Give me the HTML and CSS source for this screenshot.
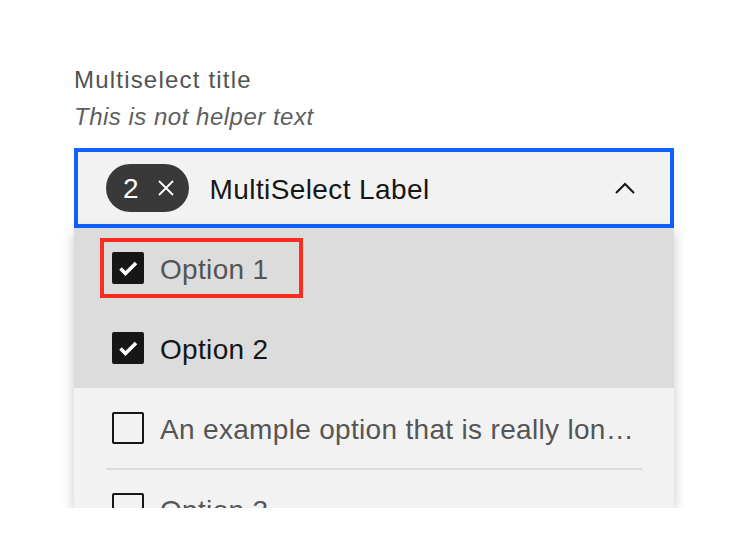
FILE: index.html
```html
<!DOCTYPE html>
<html lang="en">
<head>
  <meta charset="UTF-8">
  <meta name="viewport" content="width=device-width, initial-scale=1.0">
  <title>MultiSelect</title>
  <link rel="stylesheet" href="styles.css">
</head>
<body>
  <div class="wrap">
    <div class="title">Multiselect title</div>
    <div class="helper">This is not helper text</div>

    <div class="multiselect">
      <div class="field">
        <span class="tag">
          <span class="tag-count">2</span>
          <svg class="tag-close" width="16" height="16" viewBox="0 0 16 16">
            <path d="M1 1 L15 15 M15 1 L1 15" stroke="#fff" stroke-width="1.8" fill="none"/>
          </svg>
        </span>
        <span class="field-label">MultiSelect Label</span>
        <svg class="chevron" width="20" height="12" viewBox="0 0 20 12">
          <path d="M1 11 L10 2 L19 11" stroke="#161616" stroke-width="2.1" fill="none"/>
        </svg>
      </div>

      <div class="menu">
        <div class="option selected">
          <div class="option-inner">
            <span class="box checked">
              <svg width="32" height="32" viewBox="0 0 32 32">
                <path d="M8.5 16.5 L13.5 21.5 L24 11" stroke="#fff" stroke-width="3.6" fill="none"/>
              </svg>
            </span>
            <span class="option-text muted">Option 1</span>
          </div>
          <div class="annot"></div>
        </div>
        <div class="option selected">
          <div class="option-inner">
            <span class="box checked">
              <svg width="32" height="32" viewBox="0 0 32 32">
                <path d="M8.5 16.5 L13.5 21.5 L24 11" stroke="#fff" stroke-width="3.6" fill="none"/>
              </svg>
            </span>
            <span class="option-text">Option 2</span>
          </div>
        </div>
        <div class="option">
          <div class="option-inner">
            <span class="box"></span>
            <span class="option-text muted">An example option that is really long to show what should be done to handle long text</span>
          </div>
        </div>
        <div class="option">
          <div class="option-inner divided">
            <span class="box"></span>
            <span class="option-text muted">Option 3</span>
          </div>
        </div>
      </div>
    </div>
  </div>
</body>
</html>
```

FILE: styles.css
```css
body {
  margin: 0;
  background: #fff;
  font-family: "Liberation Sans", Arial, sans-serif;
  color: #161616;
}

.wrap {
  width: 600px;
  margin: 64px 0 0 74px;
}

.title {
  font-size: 24px;
  line-height: 32px;
  letter-spacing: 1.2px;
  color: #525252;
  margin-bottom: 5px;
}

.helper {
  font-size: 24px;
  line-height: 32px;
  font-style: italic;
  letter-spacing: 0.5px;
  color: #5e5e5e;
  margin-bottom: 15px;
}

.field {
  box-sizing: border-box;
  height: 80px;
  border: 4px solid #0f62fe;
  background: #f2f2f2;
  display: flex;
  align-items: center;
  padding: 0 35px 0 28px;
}

.tag {
  display: inline-flex;
  align-items: center;
  height: 48px;
  padding: 0 15px 0 17px;
  border-radius: 24px;
  background: #393939;
  color: #fff;
  font-size: 28px;
}

.tag-count {
  padding-top: 2px;
}

.tag-close {
  margin-left: 19px;
}

.field-label {
  margin-left: 21px;
  padding-top: 3px;
  font-size: 28px;
  letter-spacing: 0.4px;
}

.chevron {
  margin-left: auto;
}

.menu {
  height: 280px;
  overflow: hidden;
  background: #f2f2f2;
  box-shadow: 0 4px 12px rgba(0, 0, 0, 0.22);
}

.option {
  position: relative;
  height: 80px;
}

.option.selected {
  background: #dcdcdc;
}

.option-inner {
  box-sizing: border-box;
  height: 100%;
  margin: 0 32px;
  padding-left: 6px;
  display: flex;
  align-items: center;
}

.option-inner.divided {
  border-top: 2px solid #dcdcdc;
}

.box {
  box-sizing: border-box;
  flex: none;
  width: 32px;
  height: 32px;
  border: 2px solid #161616;
  border-radius: 2px;
}

.box.checked {
  border: none;
  background: #161616;
}

.box svg {
  display: block;
}

.option-text {
  flex: 1;
  min-width: 0;
  margin-left: 16px;
  margin-right: 4px;
  padding-top: 4px;
  font-size: 28px;
  letter-spacing: 0.32px;
  white-space: nowrap;
  overflow: hidden;
  text-overflow: ellipsis;
  color: #161616;
}

.option-text.muted {
  color: #555;
}

/* red annotation round the first option */
.annot {
  position: absolute;
  left: 26px;
  top: 10px;
  width: 195px;
  height: 52px;
  border: 4px solid #fa2d1f;
}
```
